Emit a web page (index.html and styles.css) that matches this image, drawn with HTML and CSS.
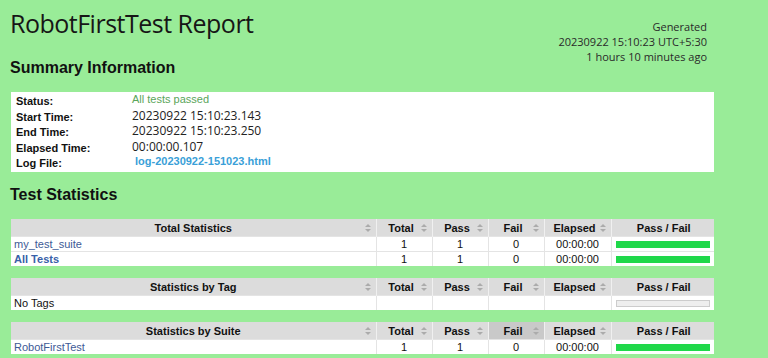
FILE: index.html
```html
<!DOCTYPE html>
<html>
<head>
<meta charset="utf-8">
<title>RobotFirstTest Report</title>
<link rel="stylesheet" href="styles.css">
</head>
<body>
<div class="page">
  <header class="top">
    <h1 class="title">RobotFirstTest Report</h1>
    <div class="generated">
      <div>Generated</div>
      <div>20230922 15:10:23 UTC+5:30</div>
      <div>1 hours 10 minutes ago</div>
    </div>
  </header>

  <h2 class="section">Summary Information</h2>
  <div class="summary">
    <div class="srow status"><span class="lbl">Status:</span><span class="val pass">All tests passed</span></div>
    <div class="srow"><span class="lbl">Start Time:</span><span class="val">20230922 15:10:23.143</span></div>
    <div class="srow"><span class="lbl">End Time:</span><span class="val">20230922 15:10:23.250</span></div>
    <div class="srow"><span class="lbl">Elapsed Time:</span><span class="val">00:00:00.107</span></div>
    <div class="srow"><span class="lbl">Log File:</span><span class="val link">log-20230922-151023.html</span></div>
  </div>

  <h2 class="section stats-title">Test Statistics</h2>

  <table class="stats">
    <colgroup><col class="c-name"><col class="c-num"><col class="c-num"><col class="c-num"><col class="c-el"><col class="c-bar"></colgroup>
    <tr class="head">
      <th><span class="hl">Total Statistics</span><i class="sort"></i></th>
      <th><span class="hl">Total</span><i class="sort"></i></th>
      <th><span class="hl">Pass</span><i class="sort"></i></th>
      <th><span class="hl">Fail</span><i class="sort"></i></th>
      <th><span class="hl">Elapsed</span><i class="sort"></i></th>
      <th class="nosort">Pass / Fail</th>
    </tr>
    <tr>
      <td class="name"><span class="lnk">my_test_suite</span></td>
      <td>1</td><td>1</td><td>0</td><td>00:00:00</td>
      <td class="barcell"><div class="bar"></div></td>
    </tr>
    <tr>
      <td class="name"><span class="lnk strong">All Tests</span></td>
      <td>1</td><td>1</td><td>0</td><td>00:00:00</td>
      <td class="barcell"><div class="bar"></div></td>
    </tr>
  </table>

  <table class="stats">
    <colgroup><col class="c-name"><col class="c-num"><col class="c-num"><col class="c-num"><col class="c-el"><col class="c-bar"></colgroup>
    <tr class="head">
      <th><span class="hl">Statistics by Tag</span><i class="sort"></i></th>
      <th><span class="hl">Total</span><i class="sort"></i></th>
      <th><span class="hl">Pass</span><i class="sort"></i></th>
      <th><span class="hl">Fail</span><i class="sort"></i></th>
      <th><span class="hl">Elapsed</span><i class="sort"></i></th>
      <th class="nosort">Pass / Fail</th>
    </tr>
    <tr>
      <td class="name plain">No Tags</td>
      <td></td><td></td><td></td><td></td>
      <td class="barcell"><div class="bar empty"></div></td>
    </tr>
  </table>

  <table class="stats">
    <colgroup><col class="c-name"><col class="c-num"><col class="c-num"><col class="c-num"><col class="c-el"><col class="c-bar"></colgroup>
    <tr class="head">
      <th><span class="hl">Statistics by Suite</span><i class="sort"></i></th>
      <th><span class="hl">Total</span><i class="sort"></i></th>
      <th><span class="hl">Pass</span><i class="sort"></i></th>
      <th class="hover"><span class="hl">Fail</span><i class="sort"></i></th>
      <th><span class="hl">Elapsed</span><i class="sort"></i></th>
      <th class="nosort">Pass / Fail</th>
    </tr>
    <tr>
      <td class="name"><span class="lnk">RobotFirstTest</span></td>
      <td>1</td><td>1</td><td>0</td><td>00:00:00</td>
      <td class="barcell"><div class="bar"></div></td>
    </tr>
  </table>
</div>
</body>
</html>
```

FILE: styles.css
```css
html, body {
  margin: 0;
  padding: 0;
}
body {
  background: #99ec98;
  font-family: "Liberation Sans", Arial, sans-serif;
  font-size: 11px;
  color: #111;
}
.page {
  width: 703px;
  margin-left: 11px;
}
.top {
  display: flex;
  justify-content: space-between;
  align-items: flex-start;
  height: 44px;
}
.title {
  margin: 6px 0 0 -1px;
  font-family: "Open Sans", "Noto Sans", sans-serif;
  font-weight: 400;
  font-size: 25px;
  line-height: 34px;
  color: #161616;
  letter-spacing: -0.5px;
}
.generated {
  margin-top: 19px;
  padding-right: 7px;
  text-align: right;
  font-family: "Open Sans", "Noto Sans", sans-serif;
  font-size: 11px;
  line-height: 15px;
  color: #2a2a2a;
}
.section {
  margin: 14px 0 0 -1px;
  font-size: 16px;
  font-weight: bold;
  line-height: 20px;
  color: #111;
}
.summary {
  margin-top: 14px;
  background: #fff;
  padding: 1px 0 3px 5px;
  height: 76px;
}
.srow {
  display: flex;
  height: 15.5px;
  align-items: flex-end;
}
.srow.status {
  height: 14px;
}
.lbl {
  width: 116px;
  font-weight: bold;
  color: #111;
}
.val {
  font-family: "Open Sans", "Noto Sans", sans-serif;
  font-size: 12px;
  line-height: 15px;
  color: #222;
}
.val.pass {
  font-family: "Liberation Sans", Arial, sans-serif;
  font-size: 11px;
  color: #5aa55a;
}
.val.link {
  font-family: "Liberation Sans", Arial, sans-serif;
  font-size: 11px;
  font-weight: bold;
  color: #3a9fd8;
  margin-left: 3px;
}
.stats-title {
  margin-top: 13px;
  margin-bottom: 14px;
}
.stats {
  width: 703px;
  border-collapse: collapse;
  table-layout: fixed;
  margin-bottom: 12px;
  background: #fff;
}
.c-name { width: 365px; }
.c-num { width: 56px; }
.c-el { width: 67px; }
.c-bar { width: 103px; }
.stats th {
  position: relative;
  background: #dcdcdc;
  height: 17px;
  padding: 0;
  font-weight: bold;
  font-size: 11px;
  color: #111;
  border-left: 1px solid #f0f0f0;
  text-align: center;
  white-space: nowrap;
}
.stats th:first-child {
  border-left: none;
}
.stats th .hl {
  display: inline-block;
  padding-right: 6px;
}
.stats th:first-child .hl {
  padding-right: 0;
}
.stats th.nosort {
  padding-left: 2px;
}
.stats th.hover {
  background: #c9c9c9;
}
.sort {
  position: absolute;
  right: 5px;
  top: 5px;
  width: 6px;
  height: 8px;
}
.sort::before, .sort::after {
  content: "";
  position: absolute;
  left: 0;
  border-left: 3px solid transparent;
  border-right: 3px solid transparent;
}
.sort::before {
  top: 0;
  border-bottom: 3px solid #ababab;
}
.sort::after {
  bottom: 0;
  border-top: 3px solid #ababab;
}
.stats td {
  height: 14px;
  padding: 0;
  text-align: center;
  font-size: 11px;
  color: #111;
  border-left: 1px solid #e4e4e4;
  border-top: 1px solid #e4e4e4;
  line-height: 14px;
}
.stats td.name {
  text-align: left;
  padding-left: 3px;
  border-left: none;
}
.lnk {
  color: #3d5a96;
}
.lnk.strong {
  font-weight: bold;
  color: #3860a8;
}
.barcell {
  padding: 0 4px !important;
}
.bar {
  height: 7px;
  background: #1fd84a;
}
.bar.empty {
  height: 5px;
  background: #eeeeee;
  border: 1px solid #cccccc;
}
```
